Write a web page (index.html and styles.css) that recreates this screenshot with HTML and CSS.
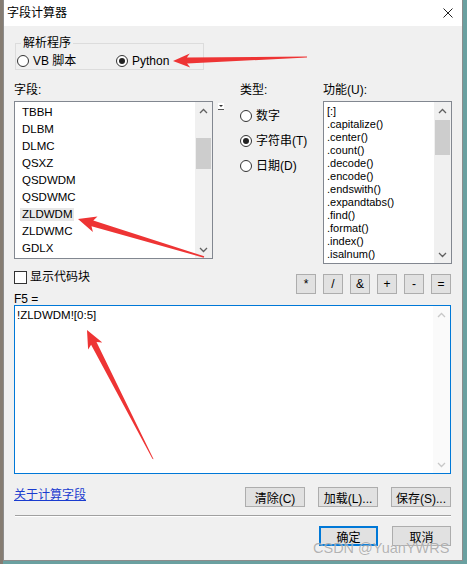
FILE: index.html
```html
<!DOCTYPE html>
<html lang="zh-CN">
<head>
  <meta charset="UTF-8">
  <title>字段计算器</title>
  <link rel="stylesheet" href="styles.css">
</head>
<body>

<div class="dialog">
  <div class="titlebar">
    <span class="title">字段计算器</span>
    <svg class="close" width="10" height="10" viewBox="0 0 10 10"><path d="M0.5 0.5 L9.5 9.5 M9.5 0.5 L0.5 9.5" stroke="#222" stroke-width="1"/></svg>
  </div>

  <div class="content">
    <fieldset class="parser">
      <legend>解析程序</legend>
      <div class="parser-opts">
        <label class="radio vb"><span class="dot"></span>VB 脚本</label>
        <label class="radio on"><span class="dot"></span>Python</label>
      </div>
    </fieldset>

    <div class="columns">
      <!-- fields -->
      <div class="col">
        <div class="label">字段:</div>
        <div class="field-wrap">
          <div class="listbox fields">
            <ul class="items">
              <li>TBBH</li>
              <li>DLBM</li>
              <li>DLMC</li>
              <li>QSXZ</li>
              <li>QSDWDM</li>
              <li>QSDWMC</li>
              <li class="hover">ZLDWDM</li>
              <li>ZLDWMC</li>
              <li>GDLX</li>
            </ul>
            <div class="scrollbar">
              <div class="sb-btn"><svg width="9" height="6" viewBox="0 0 9 6"><polyline points="1,5 4.5,1.5 8,5" fill="none" stroke="#606060" stroke-width="1.3"/></svg></div>
              <div class="track"><div class="thumb fields-thumb"></div></div>
              <div class="sb-btn"><svg width="9" height="6" viewBox="0 0 9 6"><polyline points="1,1 4.5,4.5 8,1" fill="none" stroke="#606060" stroke-width="1.3"/></svg></div>
            </div>
          </div>
          <span class="sort-mark"></span>
        </div>
      </div>

      <!-- type -->
      <div class="col types">
        <div class="label">类型:</div>
        <label class="radio"><span class="dot"></span>数字</label>
        <label class="radio on"><span class="dot"></span>字符串(T)</label>
        <label class="radio"><span class="dot"></span>日期(D)</label>
      </div>

      <!-- functions -->
      <div class="col">
        <div class="label">功能(U):</div>
        <div class="listbox funcs">
          <ul class="items">
            <li>[:]</li>
            <li>.capitalize()</li>
            <li>.center()</li>
            <li>.count()</li>
            <li>.decode()</li>
            <li>.encode()</li>
            <li>.endswith()</li>
            <li>.expandtabs()</li>
            <li>.find()</li>
            <li>.format()</li>
            <li>.index()</li>
            <li>.isalnum()</li>
            <li>.isalpha()</li>
          </ul>
          <div class="scrollbar">
            <div class="sb-btn"><svg width="9" height="6" viewBox="0 0 9 6"><polyline points="1,5 4.5,1.5 8,5" fill="none" stroke="#606060" stroke-width="1.3"/></svg></div>
            <div class="track"><div class="thumb funcs-thumb"></div></div>
            <div class="sb-btn"><svg width="9" height="6" viewBox="0 0 9 6"><polyline points="1,1 4.5,4.5 8,1" fill="none" stroke="#606060" stroke-width="1.3"/></svg></div>
          </div>
        </div>
      </div>
    </div>

    <div class="tools">
      <label class="check"><span class="box"></span>显示代码块</label>
      <div class="ops">
        <button class="op">*</button>
        <button class="op">/</button>
        <button class="op">&amp;</button>
        <button class="op">+</button>
        <button class="op">-</button>
        <button class="op">=</button>
      </div>
    </div>

    <div class="expr-label">F5 =</div>
    <div class="editor">
      <div class="code">!ZLDWDM![0:5]</div>
      <div class="scrollbar off">
        <div class="sb-btn"><svg width="9" height="6" viewBox="0 0 9 6"><polyline points="1,5 4.5,1.5 8,5" fill="none" stroke="#c8c8c8" stroke-width="1.3"/></svg></div>
        <div class="track"></div>
        <div class="sb-btn"><svg width="9" height="6" viewBox="0 0 9 6"><polyline points="1,1 4.5,4.5 8,1" fill="none" stroke="#c8c8c8" stroke-width="1.3"/></svg></div>
      </div>
    </div>

    <div class="footer">
      <a href="#" class="help">关于计算字段</a>
      <div class="btns">
        <button class="btn">清除(C)</button>
        <button class="btn">加载(L)...</button>
        <button class="btn">保存(S)...</button>
      </div>
    </div>

    <div class="sep"></div>

    <div class="actions">
      <button class="btn default">确定</button>
      <button class="btn">取消</button>
    </div>
  </div>

  <div class="watermark">CSDN @YuanYWRS</div>
</div>

<!-- red annotation arrows -->
<svg class="marks" width="467" height="564" viewBox="0 0 467 564">
  <polygon fill="#ee3434" points="173,61 189.8,53.5 186.9,57.6 307,56.5 307,57.5 187.1,63.6 190.2,67.5"/>
  <polygon fill="#ee3434" points="78,219 97.5,216.5 93.3,220.4 204.2,256.3 203.8,257.7 91.5,226.2 92.9,231.9"/>
  <polygon fill="#ee3434" points="87,330 102.3,342.4 96.5,342 153.6,459.3 152.4,458.7 91.1,344.8 88.1,349.6"/>
</svg>

</body>
</html>
```

FILE: styles.css
```css
* { margin: 0; padding: 0; box-sizing: border-box; }

html, body {
  width: 467px;
  height: 564px;
  overflow: hidden;
}

body {
  position: relative;
  background: linear-gradient(90deg, #857c72 0 3px, #6aa0a0 3px);
  font-family: "Liberation Sans", "Noto Sans CJK SC", sans-serif;
  font-size: 12px;
  color: #000;
}

.dialog {
  position: relative;
  margin-left: 3px;
  width: 460px;
  height: 561px;
  background: #f0f0f0;
  border: 1px solid #8c8c8c;
  border-top: 0;
  overflow: hidden;
}

.titlebar {
  height: 26px;
  background: #fff;
  display: flex;
  align-items: center;
  justify-content: space-between;
  padding: 0 9px 0 3px;
}

.title {
  font-size: 12px;
  line-height: 14px;
}

.content {
  padding: 0 10px;
}

/* parser group */
.parser {
  margin: 11px 0 0 1px;
  width: 189px;
  border: 1px solid #dcdcdc;
  padding: 0 0 1px 1px;
}

.parser legend {
  margin-left: 4px;
  padding: 0 2px;
  font-size: 12px;
  line-height: 12px;
}

.parser-opts {
  display: flex;
  margin-top: 5px;
}

.radio {
  display: flex;
  align-items: center;
  gap: 4px;
  line-height: 14px;
  height: 14px;
}

.radio .dot {
  width: 12px;
  height: 12px;
  border: 1px solid #333;
  border-radius: 50%;
  background: #fff;
  display: flex;
  align-items: center;
  justify-content: center;
}

.radio.on .dot::after {
  content: "";
  width: 6px;
  height: 6px;
  border-radius: 50%;
  background: #222;
}

.radio.vb {
  width: 99px;
}

/* columns */
.columns {
  display: grid;
  grid-template-columns: 226px 83px 129px;
  margin-top: 13px;
}

.label {
  line-height: 14px;
  margin-bottom: 4px;
}

.field-wrap {
  display: flex;
  align-items: flex-start;
}

.sort-mark {
  width: 6px;
  height: 7px;
  margin: 2px 0 0 5px;
  background: #fff;
  border-bottom: 1px solid #555;
  position: relative;
}

.sort-mark::after {
  content: "";
  position: absolute;
  left: 1px;
  top: 2px;
  border-left: 2px solid transparent;
  border-right: 2px solid transparent;
  border-top: 2px solid #333;
}

.listbox {
  display: flex;
  background: #fff;
  border: 1px solid #828790;
  overflow: hidden;
}

.listbox.fields {
  width: 199px;
  height: 158px;
}

.listbox.funcs {
  width: 129px;
  height: 163px;
}

.items {
  list-style: none;
  flex: 1;
  overflow: hidden;
}

.fields .items {
  padding: 4px 0 0 5px;
  font-size: 11.5px;
}

.fields .items li {
  display: table;
  height: 13px;
  line-height: 13px;
  margin-bottom: 4px;
  padding: 0 2px;
}

.fields .items li.hover {
  background: #e8e8e8;
}

.funcs .items {
  padding: 3px 0 0 3px;
  font-size: 11px;
}

.funcs .items li {
  line-height: 13px;
}

.scrollbar {
  width: 17px;
  display: flex;
  flex-direction: column;
  background: #f0f0f0;
}

.sb-btn {
  height: 17px;
  display: flex;
  align-items: center;
  justify-content: center;
}

.track {
  flex: 1;
}

.thumb {
  margin: 0 1px;
  background: #cdcdcd;
}

.fields-thumb {
  margin-top: 19px;
  height: 31px;
}

.funcs-thumb {
  margin-top: 1px;
  height: 35px;
}

.types .radio {
  margin-top: 11px;
}

.types .label + .radio {
  margin-top: 12px;
}

/* checkbox + operators */
.tools {
  display: flex;
  justify-content: space-between;
  align-items: flex-start;
  margin-top: 6px;
}

.check {
  display: flex;
  align-items: center;
  gap: 3px;
  line-height: 14px;
}

.check .box {
  width: 13px;
  height: 13px;
  border: 1px solid #333;
  background: #fff;
}

.ops {
  display: flex;
  gap: 7px;
  margin: 4px 1px 0 0;
}

button {
  font-family: inherit;
  font-size: 12px;
  color: #000;
  background: #e1e1e1;
  border: 1px solid #adadad;
}

.op {
  width: 20px;
  height: 20px;
  padding: 0;
  line-height: 14px;
}

.expr-label {
  line-height: 11px;
}

.editor {
  display: flex;
  width: 437px;
  height: 169px;
  background: #fff;
  border: 1px solid #0078d7;
}

.code {
  flex: 1;
  padding: 2px 2px;
  font-size: 11.5px;
  line-height: 14px;
}

.scrollbar.off {
  background: #fafafa;
}

/* footer */
.footer {
  display: flex;
  justify-content: space-between;
  align-items: flex-start;
  margin-top: 13px;
}

.help {
  color: #1a3ccf;
  line-height: 14px;
  margin-top: 1px;
}

.btns {
  display: flex;
  gap: 13px;
  margin-right: 1px;
}

.btn {
  width: 60px;
  height: 20px;
  padding: 0;
}

.sep {
  margin: 8px 1px 0 1px;
  border-top: 1px solid #a0a0a0;
  border-bottom: 1px solid #fff;
}

.actions {
  display: flex;
  justify-content: flex-end;
  gap: 14px;
  margin: 9px 1px 0 0;
}

.actions .btn {
  width: 59px;
}

.btn.default {
  border: 2px solid #0078d7;
}

.watermark {
  position: absolute;
  left: 309px;
  top: 540px;
  font-size: 14.5px;
  color: rgba(130, 130, 130, 0.6);
  text-shadow: 0 0 1px rgba(255, 255, 255, 0.8);
}

.marks {
  position: absolute;
  left: 0;
  top: 0;
  pointer-events: none;
}
```
